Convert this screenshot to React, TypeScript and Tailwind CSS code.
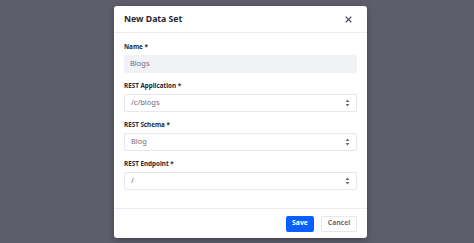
import React from "react";

const font = { fontFamily: '"Noto Sans", "Open Sans", sans-serif' };

function Chevrons() {
  return (
    <svg width="5" height="8" viewBox="0 0 5 8" className="shrink-0">
      <path d="M2.5 0.5 L4.5 3 L0.5 3 Z" fill="#6b6c7e" />
      <path d="M2.5 7.5 L4.5 5 L0.5 5 Z" fill="#6b6c7e" />
    </svg>
  );
}

function Label({ text }: { text: string }) {
  return (
    <div className="text-[6.3px] leading-[10px] font-bold text-[#272833] mb-[3px]">
      {text} <span className="text-[#272833]">*</span>
    </div>
  );
}

function SelectBox({ value }: { value: string }) {
  return (
    <div className="h-[18px] border border-[#e7e7ed] rounded-[2px] bg-white flex items-center justify-between pl-[6px] pr-[6px]">
      <span className="text-[7.5px] text-[#6b6c7e]">{value}</span>
      <Chevrons />
    </div>
  );
}

export default function App() {
  return (
    <div className="w-[474px] h-[243px] bg-[#5e5d6b] pl-[114px] pt-[6px]" style={font}>
      <div className="w-[253px] h-[232px] bg-white rounded-[3px] shadow-[0_2px_6px_rgba(0,0,0,0.3)] flex flex-col">
        <div className="h-[27px] flex items-center justify-between px-[10px] border-b border-[#ececf1]">
          <span className="text-[8.7px] font-bold text-[#272833] pt-[1px]">New Data Set</span>
          <svg width="7" height="7" viewBox="0 0 7 7" className="mr-[5px]">
            <path d="M0.7 0.7 L6.3 6.3 M6.3 0.7 L0.7 6.3" stroke="#393a4a" strokeWidth="1.1" />
          </svg>
        </div>
        <div className="flex-1 px-[10px] pt-[9px] flex flex-col gap-[8px]">
          <div>
            <Label text="Name" />
            <div className="h-[18px] bg-[#f1f2f5] rounded-[2px] flex items-center pl-[6px]">
              <span className="text-[7.5px] text-[#6b6c7e]">Blogs</span>
            </div>
          </div>
          <div>
            <Label text="REST Application" />
            <SelectBox value="/c/blogs" />
          </div>
          <div>
            <Label text="REST Schema" />
            <SelectBox value="Blog" />
          </div>
          <div>
            <Label text="REST Endpoint" />
            <SelectBox value="/" />
          </div>
        </div>
        <div className="h-[30px] border-t border-[#ececf1] flex items-center justify-end gap-[7px] px-[10px]">
          <button className="h-[16px] w-[28px] bg-[#0b5fff] rounded-[2px] text-white text-[6.8px] font-bold flex items-center justify-center">
            Save
          </button>
          <button className="h-[16px] w-[36px] bg-white border border-[#e7e7ed] rounded-[2px] text-[#6b6c7e] text-[6.8px] font-bold flex items-center justify-center">
            Cancel
          </button>
        </div>
      </div>
    </div>
  );
}
